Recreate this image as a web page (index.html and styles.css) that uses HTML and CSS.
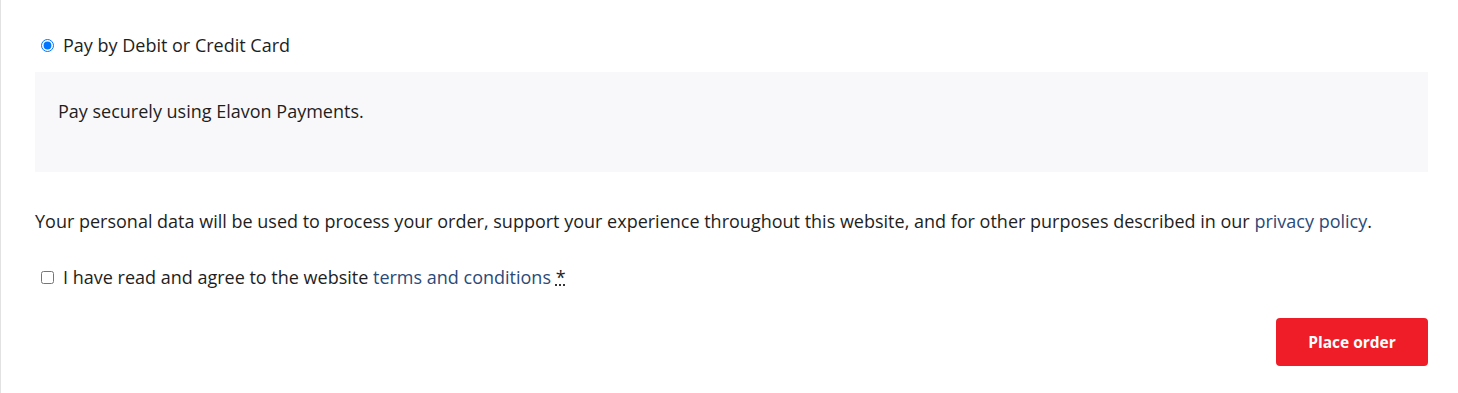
FILE: index.html
```html
<!DOCTYPE html>
<html>
<head>
<meta charset="utf-8">
<link rel="stylesheet" href="styles.css">
</head>
<body>
<div class="page">
  <div class="checkout">
    <label class="method">
      <input type="radio" name="pay" checked>
      <span>Pay by Debit or Credit Card</span>
    </label>
    <div class="method-box">
      <p>Pay securely using Elavon Payments.</p>
    </div>
    <p class="privacy">Your personal data will be used to process your order, support your experience throughout this website, and for other purposes described in our <a href="#">privacy policy</a>.</p>
    <label class="terms">
      <input type="checkbox">
      <span>I have read and agree to the website <a href="#">terms and conditions</a> <abbr title="required">*</abbr></span>
    </label>
    <div class="actions">
      <button class="place">Place order</button>
    </div>
  </div>
</div>
</body>
</html>
```
FILE: styles.css
```css
html, body {
  margin: 0;
  padding: 0;
  background: #fff;
}
body {
  font-family: "Open Sans", "Liberation Sans", sans-serif;
  font-size: 18px;
  color: #1e1e1e;
}
.page {
  border-left: 1px solid #e2e2e2;
  min-height: 393px;
  box-sizing: border-box;
}
.checkout {
  padding: 33px 30px 0 34px;
}
.method {
  display: flex;
  align-items: center;
  gap: 9px;
  padding-left: 6px;
  line-height: 24px;
  height: 24px;
}
.method input {
  margin: 0;
  width: 13px;
  height: 13px;
}
.method-box {
  margin-top: 15px;
  background: #f8f8fa;
  padding: 27px 23px 49px;
}
.method-box p {
  margin: 0;
  line-height: 24px;
}
.privacy {
  margin: 37px 0 0;
  line-height: 24px;
}
a {
  color: #2b4a78;
  text-decoration: none;
}
.terms {
  display: flex;
  align-items: center;
  gap: 9px;
  padding-left: 6px;
  margin-top: 32px;
  line-height: 24px;
}
.terms input {
  margin: 0;
  width: 13px;
  height: 13px;
}
abbr {
  text-decoration: underline dotted;
  cursor: help;
}
.actions {
  display: flex;
  justify-content: flex-end;
  margin-top: 29px;
}
.place {
  background: #ee1d27;
  color: #fff;
  border: 0;
  border-radius: 4px;
  font-family: "Open Sans", "Liberation Sans", sans-serif;
  font-weight: 700;
  font-size: 15.5px;
  width: 152px;
  height: 48px;
  padding: 0;
  cursor: pointer;
}
```
